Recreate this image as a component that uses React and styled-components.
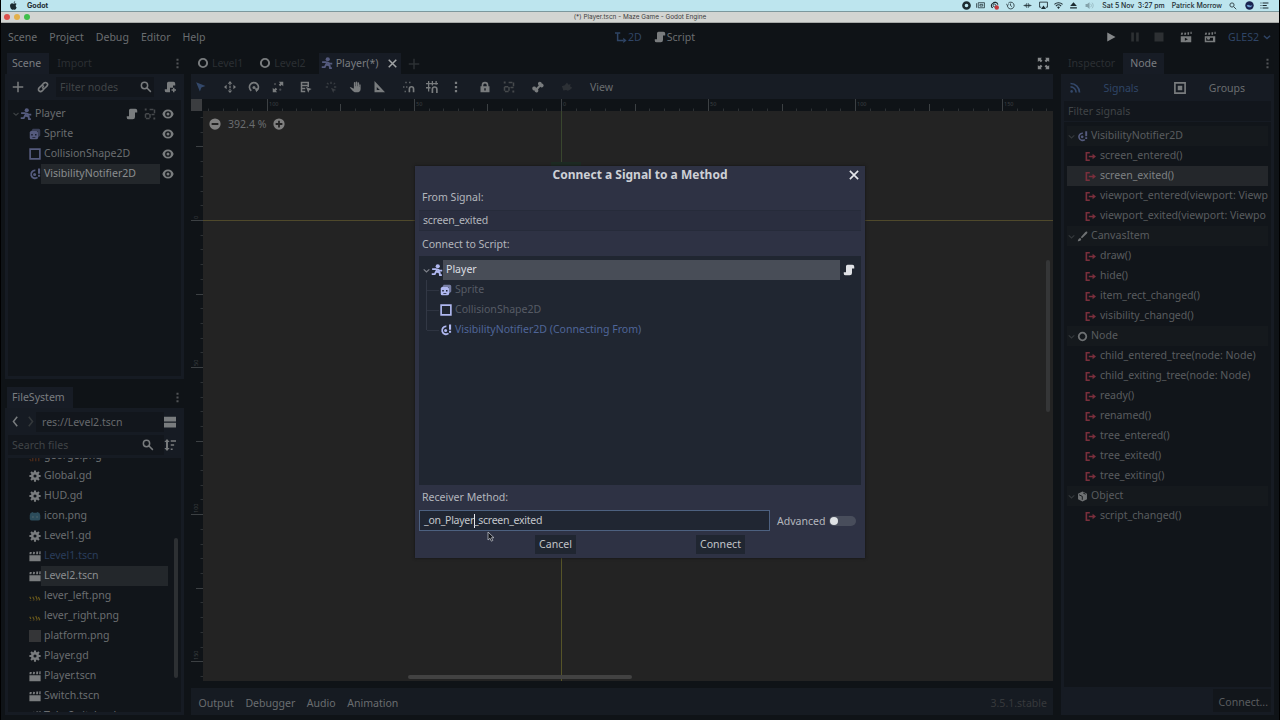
import React, { useState } from 'react';
import styled, { createGlobalStyle } from 'styled-components';

const GlobalStyle = createGlobalStyle`
  body {
    margin: 0;
    background: #000;
    overflow: hidden;
  }
  * {
    box-sizing: border-box;
  }
`;

/* ---------- icons ---------- */

const ICONS = {
  plus: <path d="M8 1v14M1 8h14" strokeWidth="2" stroke="currentColor" />,
  link: (
    <g fill="none" stroke="currentColor" strokeWidth="2.200" strokeLinecap="round">
      <path d="M7 5l2.200-2.200a2.600 2.600 0 0 1 4 4L11 9a2.600 2.600 0 0 1-3.600 0" />
      <path d="M9 11l-2.200 2.200a2.600 2.600 0 0 1-4-4L5 7a2.600 2.600 0 0 1 3.600 0" />
    </g>
  ),
  search: (
    <g fill="none" stroke="currentColor" strokeWidth="2">
      <circle cx="6" cy="6" r="4.200" />
      <path d="M9 9l5.500 5.500" />
    </g>
  ),
  script: <path d="M6 1a2 2 0 0 0-2 2v8H1v1.500a2.500 2.500 0 0 0 2.500 2.500H9a3 3 0 0 0 3-3V6h3V3.500A2.500 2.500 0 0 0 12.500 1z" />,
  scriptPlus: (
    <>
      <path d="M6 1a2 2 0 0 0-2 2v8H1v1.500a2.500 2.500 0 0 0 2.500 2.500H8V9h4V6h3V3.500A2.500 2.500 0 0 0 12.500 1z" />
      <path d="M12 9h2v2h2v2h-2v2h-2v-2h-2v-2h2z" />
    </>
  ),
  group: (
    <g fill="none" stroke="currentColor" strokeWidth="2">
      <path d="M7.500 2H14v6.500h-4M2 7.500h6V14H2z" strokeDasharray="5 1.500" />
      <path d="M1 2h2.500M12.500 14H15" strokeWidth="2.500" />
    </g>
  ),
  eye: (
    <>
      <path d="M8 2C4.200 2 1.300 4.600.5 8c.8 3.400 3.700 6 7.500 6s6.700-2.600 7.500-6C14.700 4.600 11.800 2 8 2zm0 2.200a3.800 3.800 0 1 1 0 7.600 3.800 3.800 0 0 1 0-7.600z" fillRule="evenodd" />
      <circle cx="8" cy="8" r="2" />
    </>
  ),
  body: (
    <>
      <circle cx="9" cy="3" r="2.800" />
      <path
        d="M1.500 6.800h4.500l3 .8 2.500 1.200H15M8.500 7L6.500 10.500l-1.500 3H1M7.500 10l4 1.500.5 3.500h2.500"
        fill="none"
        stroke="currentColor"
        strokeWidth="2.500"
        strokeLinejoin="round"
      />
    </>
  ),
  sprite: (
    <>
      <path d="M5 1h8a2 2 0 0 1 2 2v7l-3 3V4H3z" opacity="0.6" />
      <path d="M1 6a2 2 0 0 1 2-2h7a2 2 0 0 1 2 2v7a2 2 0 0 1-2 2H3a2 2 0 0 1-2-2z" />
      <path d="M3 8h2v2H3zM8 8h2v2H8zM4.500 12h4v1h-4z" fill="#1b2030" />
    </>
  ),
  square: <path d="M1.500 1.500h13v13h-13z" fill="none" stroke="currentColor" strokeWidth="2.200" />,
  notifier: (
    <>
      <path d="M8.500 3.300A5.200 5.200 0 1 0 11.300 12.500" fill="none" stroke="currentColor" strokeWidth="2.400" />
      <circle cx="7.500" cy="8.500" r="2" />
      <path d="M12 .5h2.800v7H12zM12 9h2.800v2.500H12z" />
    </>
  ),
  ring: <circle cx="8" cy="8" r="5.500" fill="none" stroke="currentColor" strokeWidth="2.600" />,
  close: <path d="M2.500 2.500l11 11M13.500 2.500l-11 11" stroke="currentColor" strokeWidth="2.200" />,
  axes: (
    <>
      <path d="M3.500 3v9.500H11" fill="none" stroke="currentColor" strokeWidth="2" />
      <path d="M0 3.500h7V1.500H0zM11 9l4.500 3.500L11 16z" />
    </>
  ),
  play: <path d="M3 2v12l11-6z" />,
  pause: <path d="M3 2h3.500v12H3zM9.500 2H13v12H9.500z" />,
  stop: <path d="M2 2h12v12H2z" />,
  clapPlay: (
    <>
      <path d="M1 7h14v8H1z" />
      <path d="M1 5l1-3 2 .4L3.500 5zM5.500 5l.6-3 2.200.2L8 5zM10 5V1.800h2.200L12 5zM14 4V1h1.500v3z" />
      <path d="M6.500 9v4l4-2z" fill="#101417" />
    </>
  ),
  clapFile: (
    <>
      <path d="M1 7h14v8H1zM3 9v4h9V9z" fillRule="evenodd" />
      <path d="M1 5l1-3 2 .4L3.500 5zM5.500 5l.6-3 2.200.2L8 5zM10 5V1.800h2.200L12 5zM14 4V1h1.500v3z" />
      <circle cx="6" cy="9.500" r="2" />
    </>
  ),
  clap: (
    <>
      <path d="M.5 7H15.500v8H.5z" />
      <path d="M.5 5.500L1 2.500l2.800.3-.6 2.700zM5 5.500l.6-3.200 2.400.2-.5 3zM9.500 5.500l.3-3.500h2.500L12 5.500zM13.500 5.500l.4-4h1.600v4z" />
    </>
  ),
  arrow: <path d="M1.500 1.500l5 12.500 2-5.500 5.500-2z" />,
  move: (
    <>
      <path d="M8 0l3 3.500H5zM8 16l3-3.500H5zM0 8l3.500-3v6zM16 8l-3.500-3v6z" />
      <path d="M6.900 6.900h2.200v2.200H6.900zM7 4.300h2v1.400H7zM7 10.300h2v1.400H7z" />
    </>
  ),
  rotate: (
    <>
      <path d="M4.500 13A6 6 0 1 1 12 12.500" fill="none" stroke="currentColor" strokeWidth="2.200" />
      <circle cx="8" cy="8.500" r="2" />
      <path d="M9 9.500h6L11 15z" />
    </>
  ),
  scale: (
    <>
      <path d="M9 1h6v6l-2-2-2 2-2-2 2-2zM7 15H1V9l2 2 2-2 2 2-2 2z" />
      <circle cx="4" cy="4" r="1.500" opacity="0.5" />
      <circle cx="11" cy="11.500" r="1.500" opacity="0.5" />
    </>
  ),
  listSelect: (
    <>
      <path d="M1 1h11v7h-2V7H3v2h4v2H3v2h4v2H1zM3 3v2h7V3z" fillRule="evenodd" />
      <path d="M8 8l7.500 2.800-3 1.400L11 15.500z" />
    </>
  ),
  pivot: (
    <g opacity="0.55">
      <path d="M7 1h2v3H7zM1 7h3v2H1zM12 7h3v2h-3zM3 3l2 2M8 9l7 3-3 1-1 3z" />
      <path d="M2 3l1.500-1 2 2-1.500 1zM11 4l2-2 1 1-2 2z" />
    </g>
  ),
  hand: <path d="M6.500 8V2.200a1 1 0 0 1 2 0V7h.5V1.500a1 1 0 0 1 2 0V7h.5V2.500a1 1 0 0 1 2 0V8h.3V5a.9.9 0 0 1 1.700 0v5.500c0 3-2 4.500-5 4.500H9c-2 0-3.200-.8-4.200-2L1 8.800c.8-.9 2-.8 3 .1L5.500 10h1z" />,
  ruler: <path d="M2 0v15h14zM5 8l4.200 4H5z" fillRule="evenodd" />,
  snap: (
    <>
      <path d="M3 1h2v2H3zM8 1h2v2H8zM0 7h2v2H0zM4 7h2v2H4zM2 13h2v2H2z" opacity="0.7" />
      <path d="M8.500 15v-4.500a2.800 2.800 0 0 1 5.600 0V15" fill="none" stroke="currentColor" strokeWidth="2.200" />
    </>
  ),
  gridSnap: (
    <>
      <path d="M3.500 0v14M8.500 0v6M13.500 0v5M0 3.500h16M0 9h6" fill="none" stroke="currentColor" strokeWidth="1.700" />
      <path d="M8.500 16v-5a3 3 0 0 1 6 0v5" fill="none" stroke="currentColor" strokeWidth="2.200" />
    </>
  ),
  dots: <path d="M6.500 1h3v3h-3zM6.500 6.500h3v3h-3zM6.500 12h3v3h-3z" />,
  lock: <path d="M8 1a4.500 4.500 0 0 0-4.500 4.500V7H2v8h12V7h-1.500V5.500A4.500 4.500 0 0 0 8 1zm0 2.200a2.300 2.300 0 0 1 2.300 2.300V7H5.700V5.500A2.300 2.300 0 0 1 8 3.200zM7 9.500h2v3H7z" fillRule="evenodd" />,
  bone: <path d="M10.500 1a2.500 2.500 0 0 0-2.300 3.500L9 6 5.500 9.200a2.600 2.600 0 1 0-2 3.300 2.500 2.500 0 1 0 4.400-1.300L11 7.800a2.600 2.600 0 1 0 2-4.400A2.500 2.500 0 0 0 10.500 1z" />,
  paw: <path d="M5 5.500L8 2l2 3 3-1-1 3 3 2-3 2.500-3 1.500-2-1-4 .5L2 9l-1-2z" opacity="0.6" />,
  expand: <path d="M1 1h5L4.700 2.500l2 2-2 2-2-2L1 6zM15 1v5l-1.700-1.500-2 2-2-2 2-2L10 1zM1 15v-5l1.700 1.500 2-2 2 2-2 2L6 15zM15 15h-5l1.300-1.500-2-2 2-2 2 2L15 10z" />,
  signals: (
    <g fill="none" stroke="currentColor" strokeWidth="2.200">
      <path d="M2 2a12 12 0 0 1 12 12M2 6.500A7.500 7.500 0 0 1 9.500 14" />
      <circle cx="3.500" cy="12.500" r="1.700" fill="currentColor" stroke="none" />
    </g>
  ),
  groups: (
    <>
      <path d="M1.200 1.200h13.600v13.600H1.200z" fill="none" stroke="currentColor" strokeWidth="2.200" />
      <path d="M5 5h6v6H5z" />
    </>
  ),
  emit: (
    <>
      <path d="M7 2.500H2v11h5" fill="none" stroke="currentColor" strokeWidth="2.400" />
      <path d="M5.500 6.800H11V4l5 4-5 4V9.200H5.500z" />
    </>
  ),
  brush: <path d="M14.800 1.200c-.8-.7-2-.4-2.700.3L5.500 9l1.800 1.700 7.200-7c.6-.7.9-1.800.3-2.500zM4.500 10C2.500 10.500 2 12 1 14.800c2.500.4 4.800-.6 5.200-3.200z" />,
  cube: (
    <>
      <path d="M8 .7L1.500 4v8L8 15.300 14.500 12V4z" />
      <path d="M3 5.500l4.700 2.300v5M12.500 4.700L9 3" stroke="#15191c" strokeWidth="1.400" fill="none" />
    </>
  ),
  gear: (
    <>
      <path d="M8 .5v15M.5 8h15M2.700 2.700l10.600 10.600M13.300 2.700L2.700 13.300" stroke="currentColor" strokeWidth="2.800" />
      <circle cx="8" cy="8" r="3.800" fill="none" stroke="currentColor" strokeWidth="3" />
      <circle cx="8" cy="8" r="2.100" fill="#11151a" />
    </>
  ),
  godot: (
    <>
      <path d="M2 4L5 2.500l1 1h4l1-1L14 4l1 3v5a3 3 0 0 1-3 2H4a3 3 0 0 1-3-2V7z" fill="#2c4c5b" />
      <path d="M4 8h2.500v2.500H4zM9.500 8H12v2.500H9.500z" fill="#3f5963" />
    </>
  ),
  lever: (
    <>
      <path d="M1 9l1.500 3M5 9l2 4M9 8l2 5M12.500 9.500l2 4" stroke="#6b5a1c" strokeWidth="1.500" />
      <path d="M1 14h13" stroke="#453a1c" strokeDasharray="2 2" />
    </>
  ),
  george: <path d="M1 12l2 3M5 10v5M9 11v4M13 9v6" stroke="#4a2a1a" strokeWidth="1.800" />,
  platform: <path d="M0 0h16v16H0z" fill="#343537" />,
  left: <path d="M10.500 1L5 8l5.500 7" fill="none" stroke="currentColor" strokeWidth="2.200" />,
  right: <path d="M5.500 1L11 8l-5.500 7" fill="none" stroke="currentColor" strokeWidth="2.200" />,
  down: <path d="M3 6l5 4.500L13 6" fill="none" stroke="currentColor" strokeWidth="2.200" />,
  split: <path d="M0 1h16v6.300H0zM0 9h16v6.300H0z" />,
  sort: (
    <>
      <path d="M4 0l3.500 4H5.300v8h2.200L4 16 .5 12h2.200V4H.5z" />
      <path d="M9 1.500h7v2H9zM9 7h4.500v2H9zM9 12.500h2.500v2H9z" />
    </>
  ),
  minusDisc: <path d="M8 .5a7.500 7.500 0 1 1 0 15 7.500 7.500 0 0 1 0-15zM3.500 6.800v2.400h9V6.800z" fillRule="evenodd" />,
  plusDisc: <path d="M8 .5a7.500 7.500 0 1 1 0 15 7.500 7.500 0 0 1 0-15zM6.800 3.500v3.300H3.500v2.400h3.300v3.300h2.400V9.200h3.300V6.800H9.200V3.500z" fillRule="evenodd" />,
  apple: (
    <>
      <path d="M11 .3c.1 1.500-1.200 3-2.700 3C8.200 1.800 9.600.5 11 .3z" />
      <path d="M13.600 11.500c-.7 1.800-2 4-3.400 4-.9 0-1.200-.6-2.200-.6s-1.400.6-2.200.6C4 15.500 1.800 11.700 1.800 8.500c0-2.800 1.800-4.400 3.600-4.400 1 0 1.900.7 2.600.7.600 0 1.700-.8 3-.7.8 0 2 .4 2.600 1.400-2.400 1.500-2 4.900 0 6z" />
    </>
  ),
  record: <circle cx="8" cy="8" r="5.500" fill="none" stroke="currentColor" strokeWidth="4.500" />,
  stage: (
    <g fill="none" stroke="currentColor" strokeWidth="1.300">
      <path d="M4 3h11v9H4zM1 4v8" />
      <path d="M7 6h5v3H7z" />
    </g>
  ),
  cloud: (
    <>
      <path d="M5 12a4 4 0 0 1 0-7.500 5 5 0 0 1 9 2" fill="none" stroke="currentColor" strokeWidth="2" />
      <circle cx="8" cy="8" r="2.400" fill="none" stroke="currentColor" strokeWidth="1.500" />
      <circle cx="12" cy="11.500" r="4" fill="#c3383c" />
    </>
  ),
  clock: (
    <g fill="none" stroke="currentColor" strokeWidth="1.400">
      <path d="M2.500 9A6 6 0 1 0 4 4M8 4.500V8l2.500 2M1 5l1.600 3.500L5 6" />
    </g>
  ),
  wave: <path d="M1 8h14M4 6v4M6.500 4v8M9.500 4v8M12 6v4" stroke="currentColor" strokeWidth="1.300" />,
  airplay: (
    <>
      <path d="M4 11H1V2h14v9h-3" fill="none" stroke="currentColor" strokeWidth="1.500" />
      <path d="M8 8l4.500 6h-9z" />
    </>
  ),
  wifi: (
    <g fill="none" stroke="currentColor" strokeWidth="1.800">
      <path d="M.8 6a10.500 10.500 0 0 1 14.400 0M3.300 9a6.800 6.800 0 0 1 9.400 0" />
      <path d="M5.500 11L8 14l2.500-3A3.600 3.600 0 0 0 5.500 11z" fill="currentColor" stroke="none" />
    </g>
  ),
  eject: <path d="M8 2l6 7H2zM2 11h12v2.200H2z" />,
  volume: (
    <g opacity="0.35">
      <path d="M1 5.500h3L8 2v12l-4-3.500H1z" />
      <path d="M10 5a4 4 0 0 1 0 6M12.500 3a7 7 0 0 1 0 10" fill="none" stroke="currentColor" />
    </g>
  ),
  siri: (
    <>
      <circle cx="8" cy="8" r="7.500" fill="#1a2350" />
      <path d="M3 8.500C6 3.500 9 11 13 7c-1 4.500-6 6-10 1.500z" fill="#6d9fd0" />
    </>
  ),
  list: <path d="M1 3.500h1.500M4.500 3.500H15M1 8h1.500M4.500 8H12M1 12.500h1.500M4.500 12.500H15" stroke="currentColor" strokeWidth="1.800" />,
};

const Svg = styled.svg`
  display: block;
  flex: none;
  width: ${(p) => p.$size}px;
  height: ${(p) => p.$size}px;
  color: ${(p) => p.$color};
  margin-left: ${(p) => p.$before || 0}px;
`;

const Icon = ({ name, size = 12, color = '#797c7e', before }) => (
  <Svg viewBox="0 0 16 16" fill="currentColor" $size={size} $color={color} $before={before}>
    {ICONS[name]}
  </Svg>
);

/* ---------- window chrome ---------- */

const Screen = styled.div`
  width: 1280px;
  height: 720px;
  display: flex;
  flex-direction: column;
  border: solid #000;
  border-width: 0 1px;
  background: #0f1317;
  font-family: 'Noto Sans', sans-serif;
  font-size: 10.55px;
  line-height: 20px;
  color: #6a6d70;
  white-space: nowrap;
  overflow: hidden;
`;

const MacBar = styled.div`
  display: flex;
  align-items: center;
  height: 12px;
  flex: none;
  padding: 0 10px 0 8px;
  background: #bde5ee;
  border-bottom: 1px solid #7d989d;
  color: #1c2b30;
  font-family: Inter, sans-serif;
  font-size: 6.9px;
  font-weight: 500;
  line-height: 11px;
`;

const AppName = styled.b`
  margin: 0 auto 0 9px;
  font-size: 7.1px;
  font-weight: 700;
`;

const MacText = styled.span`
  margin-left: ${(p) => p.$before}px;
`;

const TitleBar = styled.div`
  display: grid;
  grid-template-columns: 120px 1fr 120px;
  align-items: center;
  height: 11px;
  flex: none;
  background: #d3d5d2;
  border-bottom: 1px solid #a7aaa8;
  color: #3d4040;
  font-family: Inter, sans-serif;
  font-size: 6.4px;
  line-height: 10px;
  text-align: center;
`;

const Lights = styled.div`
  display: flex;
  gap: 4px;
  padding-left: 3px;
`;

const Light = styled.i`
  width: 6px;
  height: 6px;
  border-radius: 50%;
  background: ${(p) => p.$color};
`;

/* ---------- editor layout ---------- */

const TopMenu = styled.div`
  display: grid;
  grid-template-columns: 607px 1fr auto;
  align-items: center;
  height: 28px;
  flex: none;
  padding: 0 7px;
`;

const Group = styled.div`
  display: flex;
  align-items: center;
  gap: ${(p) => p.$gap || 0}px;
`;

const Accent = styled.span`
  color: #2f4566;
  margin-right: ${(p) => p.$after || 0}px;
`;

const Main = styled.div`
  display: grid;
  grid-template-columns: 179px 863px 213px;
  column-gap: 7px;
  flex: 1;
  min-height: 0;
  padding: 2px 0 5px 4px;
`;

const Column = styled.div`
  display: flex;
  flex-direction: column;
  min-width: 0;
  min-height: 0;
  padding-right: ${(p) => p.$end || 0}px;
`;

const TabRow = styled.div`
  display: flex;
  align-items: center;
  height: 21px;
  flex: none;
  padding: ${(p) => p.$pad || '0 1px 0 2px'};
`;

const Tab = styled.div`
  display: flex;
  align-items: center;
  height: 21px;
  padding: ${(p) => p.$pad || '0 8px 0 5px'};
  border-bottom: 1px solid transparent;
  background: ${(p) => (p.$active ? '#171c25' : 'transparent')};
  color: ${(p) => (p.$active ? '#7a7d80' : '#2b2f33')};
`;

const TabText = styled.span`
  margin-left: 3px;
`;

const Spacer = styled.span`
  flex: 1;
`;

const Dock = styled.div`
  display: flex;
  flex-direction: column;
  height: ${(p) => (p.$height ? `${p.$height}px` : 'auto')};
  flex: ${(p) => (p.$height ? 'none' : 1)};
  min-height: 0;
  padding: 0 3px 3px;
  background: #161b23;
`;

const DockGap = styled.div`
  height: 8px;
  flex: none;
`;

const BarRow = styled.div`
  display: flex;
  align-items: center;
  flex: none;
  height: ${(p) => p.$height}px;
  padding: ${(p) => p.$pad || 0};
`;

const Field = styled.div`
  display: flex;
  align-items: center;
  justify-content: space-between;
  flex: 1;
  height: 20px;
  margin-left: ${(p) => p.$before || 0}px;
  padding: ${(p) => p.$pad || '0 5px 0 4px'};
  background: #12161c;
  color: ${(p) => (p.$filled ? '#66696c' : '#404447')};
`;

const TreeBox = styled.div`
  position: relative;
  flex: 1;
  min-height: 0;
  overflow: hidden;
  padding: 4px 3px;
  background: #11151a;
`;

const TreeRow = styled.div`
  display: flex;
  align-items: center;
  height: 20px;
  padding-left: ${(p) => p.$indent || 0}px;
`;

const RowLabel = styled.span`
  flex: 1;
  height: 20px;
  padding-left: 3px;
  line-height: 18px;
  background: ${(p) => (p.$selected ? '#23272b' : 'transparent')};
  color: ${(p) => p.$color || (p.$selected ? '#8a8d8f' : '#6a6d70')};
`;

const RowTools = styled.div`
  display: flex;
  align-items: center;
  justify-content: flex-end;
  gap: 6px;
  padding: 0 4px 0 2px;
`;

/* ---------- left column ---------- */

const NODE_BLUE = '#555b7e';

const NODES = [
  { icon: 'sprite', label: 'Sprite' },
  { icon: 'square', label: 'CollisionShape2D' },
  { icon: 'notifier', label: 'VisibilityNotifier2D', selected: true },
];

const FILES = [
  { icon: 'george', label: 'george.png' },
  { icon: 'gear', label: 'Global.gd' },
  { icon: 'gear', label: 'HUD.gd' },
  { icon: 'godot', label: 'icon.png' },
  { icon: 'gear', label: 'Level1.gd' },
  { icon: 'clap', label: 'Level1.tscn', color: '#2a3d5a' },
  { icon: 'clap', label: 'Level2.tscn', selected: true },
  { icon: 'lever', label: 'lever_left.png' },
  { icon: 'lever', label: 'lever_right.png' },
  { icon: 'platform', label: 'platform.png' },
  { icon: 'gear', label: 'Player.gd' },
  { icon: 'clap', label: 'Player.tscn' },
  { icon: 'clap', label: 'Switch.tscn' },
  { icon: 'clap', label: 'TubeSwitch.gd' },
];

const FileTree = styled(TreeBox)`
  margin-top: 2px;
  padding: 0;
`;

// the list is scrolled part of a row down
const FileList = styled.div`
  margin-top: -12px;
  width: 160px;
`;

const ScrollThumb = styled.i`
  position: absolute;
  border-radius: 3px;
  background: ${(p) => p.$color || '#2d3033'};
  left: ${(p) => p.$x}px;
  top: ${(p) => p.$y}px;
  width: ${(p) => p.$w}px;
  height: ${(p) => p.$h}px;
`;

function SceneDock() {
  return (
    <>
      <TabRow>
        <Tab $active>Scene</Tab>
        <Tab $pad="0 8px">Import</Tab>
        <Spacer />
        <Icon name="dots" size={11} color="#505356" />
      </TabRow>
      <Dock $height={305}>
        <BarRow $height={26} $pad="0 5px 0 4px">
          <Icon name="plus" />
          <Icon name="link" before={13} />
          <Field $before={7} $pad="0 2px 0 4px">
            Filter nodes
            <Icon name="search" />
          </Field>
          <Icon name="scriptPlus" before={10} />
        </BarRow>
        <TreeBox>
          <TreeRow $indent={1}>
            <Icon name="down" size={8} color="#3c4043" />
            <Icon name="body" color={NODE_BLUE} />
            <RowLabel>Player</RowLabel>
            <RowTools>
              <Icon name="script" />
              <Icon name="group" color="#46494c" />
              <Icon name="eye" />
            </RowTools>
          </TreeRow>
          {NODES.map((n) => (
            <TreeRow key={n.label} $indent={18}>
              <Icon name={n.icon} color={NODE_BLUE} />
              <RowLabel $selected={n.selected}>{n.label}</RowLabel>
              <RowTools>
                <Icon name="eye" />
              </RowTools>
            </TreeRow>
          ))}
        </TreeBox>
      </Dock>
    </>
  );
}

function FileSystemDock() {
  return (
    <>
      <TabRow>
        <Tab $active>FileSystem</Tab>
        <Spacer />
        <Icon name="dots" size={11} color="#505356" />
      </TabRow>
      <Dock>
        <BarRow $height={27} $pad="0 5px 0 2px">
          <Icon name="left" size={11} />
          <Icon name="right" size={11} color="#34383b" before={4} />
          <Field $filled $pad="0 5px 0 6px">
            res://Level2.tscn
          </Field>
          <Icon name="split" />
        </BarRow>
        <BarRow $height={21} $pad="0 5px 2px 0">
          <Field $pad="0 10px 0 4px">
            Search files
            <Icon name="search" />
          </Field>
          <Icon name="sort" />
        </BarRow>
        <FileTree>
          <FileList>
            {FILES.map((f) => (
              <TreeRow key={f.label} $indent={21}>
                <Icon name={f.icon} />
                <RowLabel $selected={f.selected} $color={f.color}>
                  {f.label}
                </RowLabel>
              </TreeRow>
            ))}
          </FileList>
          <ScrollThumb $x={166} $y={80} $w={4} $h={140} />
        </FileTree>
      </Dock>
    </>
  );
}

/* ---------- viewport ---------- */

// icon, space before it, colour
const TOOLS = [
  ['arrow', 4, '#33486a'],
  ['move', 17],
  ['rotate', 12],
  ['scale', 12],
  ['listSelect', 16],
  ['pivot', 13, '#54575a'],
  ['hand', 12],
  ['ruler', 12],
  ['snap', 18],
  ['gridSnap', 11],
  ['dots', 12],
  ['lock', 17],
  ['group', 12, '#46494c'],
  ['bone', 17],
  ['paw', 17, '#3b3e41'],
];

const Toolbar = styled.div`
  display: flex;
  align-items: center;
  height: 25px;
  flex: none;
  background: #171c24;
`;

const ViewMenu = styled.span`
  margin-left: 17px;
`;

const Viewport = styled.div`
  display: grid;
  grid-template-columns: 12px 1fr;
  grid-template-rows: 12px 1fr;
  height: 582px;
  flex: none;
`;

const Corner = styled.div`
  background: #3b3d40;
  margin-right: 1px;
`;

const RulerSvg = styled.svg`
  display: block;
  background: #0f1317;
  font-size: 5.5px;
`;

const Canvas = styled.div`
  position: relative;
  background: #232323;
`;

const ZoomBar = styled.div`
  display: flex;
  align-items: center;
  gap: 7px;
  padding: 3px 0 0 6px;
`;

const OriginX = styled.i`
  position: absolute;
  left: 0;
  right: 0;
  top: 109px;
  height: 1px;
  background: #4f492b;
`;

const OriginY = styled.i`
  position: absolute;
  top: 0;
  bottom: 0;
  left: 358px;
  width: 1px;
  background: linear-gradient(#39462e 0 60px, #565428 60px);
`;

const SpriteEdge = styled.i`
  position: absolute;
  left: 348px;
  top: 51px;
  width: 30px;
  height: 5px;
  background: #1d2b23;
`;

const BottomPanel = styled.div`
  display: flex;
  align-items: center;
  gap: 11.5px;
  height: 27px;
  margin-top: 7px;
  padding: 2px 6px 0 7.5px;
  background: #161b22;
`;

const Version = styled.span`
  margin-left: auto;
  color: #36393c;
`;

const STEP = 14.71;

// ticks every 5 units, longer ones every 25, labels every 50
function ticks(origin, length) {
  const out = [];
  for (let i = Math.ceil(-origin / STEP); origin + i * STEP < length; i++) {
    out.push({ i, at: Math.round(origin + i * STEP) + 0.5, size: i % 10 === 0 ? 12 : i % 5 === 0 ? 7 : 2.5 });
  }
  return out;
}

function HorizontalRuler() {
  return (
    <RulerSvg width="850" height="12">
      {ticks(358, 850).map((t) => (
        <g key={t.i}>
          <path d={`M${t.at} 12v-${t.size}`} stroke={t.size > 5 ? '#3c4043' : '#2d3134'} />
          {t.i % 10 === 0 && (
            <text x={t.at + 1.5} y="7" fill="#3c4043">
              {Math.abs(t.i * 5)}
            </text>
          )}
        </g>
      ))}
    </RulerSvg>
  );
}

function VerticalRuler() {
  return (
    <RulerSvg width="12" height="570">
      {ticks(109, 570).map((t) => (
        <g key={t.i}>
          <path d={`M12 ${t.at}h-${t.size}`} stroke={t.size > 5 ? '#3c4043' : '#2d3134'} />
          {t.i % 10 === 0 && (
            <text transform={`translate(7 ${t.at - 1.5}) rotate(-90)`} fill="#3c4043">
              {Math.abs(t.i * 5)}
            </text>
          )}
        </g>
      ))}
    </RulerSvg>
  );
}

function Workspace() {
  return (
    <Column $end={1}>
      <TabRow $pad="0 3px 0 0">
        <Tab $pad="0 9px 0 6px">
          <Icon name="ring" />
          <TabText>Level1</TabText>
        </Tab>
        <Tab $pad="0 13px 0 7px">
          <Icon name="ring" />
          <TabText>Level2</TabText>
        </Tab>
        <Tab $active $pad="0 3px 0 2px">
          <Icon name="body" color={NODE_BLUE} />
          <TabText>Player(*)</TabText>
          <Icon name="close" size={11} color="#a0a3a5" before={8} />
        </Tab>
        <Icon name="plus" color="#2d3134" before={7} />
        <Spacer />
        <Icon name="expand" size={13} color="#85888a" />
      </TabRow>
      <Toolbar>
        {TOOLS.map(([name, before, color]) => (
          <Icon key={name} name={name} before={before} color={color} />
        ))}
        <ViewMenu>View</ViewMenu>
      </Toolbar>
      <Viewport>
        <Corner />
        <HorizontalRuler />
        <VerticalRuler />
        <Canvas>
          <OriginX />
          <OriginY />
          <SpriteEdge />
          <ZoomBar>
            <Icon name="minusDisc" color="#808080" />
            392.4 %
            <Icon name="plusDisc" color="#808080" />
          </ZoomBar>
          <ScrollThumb $x={205} $y={564} $w={224} $h={4} $color="#424242" />
          <ScrollThumb $x={843} $y={149} $w={4} $h={152} $color="#353637" />
        </Canvas>
      </Viewport>
      <BottomPanel>
        {['Output', 'Debugger', 'Audio', 'Animation'].map((t) => (
          <span key={t}>{t}</span>
        ))}
        <Version>3.5.1.stable</Version>
      </BottomPanel>
    </Column>
  );
}

/* ---------- signals ---------- */

const SIGNALS = [
  {
    icon: 'notifier',
    color: NODE_BLUE,
    name: 'VisibilityNotifier2D',
    items: ['screen_entered()', 'screen_exited()', 'viewport_entered(viewport: Viewp', 'viewport_exited(viewport: Viewpo'],
  },
  { icon: 'brush', name: 'CanvasItem', items: ['draw()', 'hide()', 'item_rect_changed()', 'visibility_changed()'] },
  {
    icon: 'ring',
    name: 'Node',
    items: [
      'child_entered_tree(node: Node)',
      'child_exiting_tree(node: Node)',
      'ready()',
      'renamed()',
      'tree_entered()',
      'tree_exited()',
      'tree_exiting()',
    ],
  },
  { icon: 'cube', name: 'Object', items: ['script_changed()'] },
];

const SignalTree = styled(TreeBox)`
  margin-top: 1px;
`;

const SignalRow = styled(TreeRow)`
  background: ${(p) => (p.$selected ? '#24272b' : p.$head ? '#15191d' : 'transparent')};
  color: ${(p) => (p.$selected ? '#7d8082' : '#595c5f')};
`;

const SignalText = styled.span`
  height: 20px;
  margin-left: ${(p) => (p.$head ? 3 : 4)}px;
  line-height: 18px;
`;

const Modes = styled(BarRow)`
  display: grid;
  grid-template-columns: 12px 93px 12px 82px;
  text-align: center;
`;

const ConnectRow = styled.div`
  display: flex;
  justify-content: flex-end;
  height: 23px;
  margin-top: 2px;
`;

const ConnectButton = styled.div`
  padding: 3px 3px 0 6px;
  background: #12161b;
  color: #595c5f;
`;

function NodeDock() {
  return (
    <Column>
      <TabRow>
        <Tab>Inspector</Tab>
        <Tab $active $pad="0 7px">
          Node
        </Tab>
        <Spacer />
        <Icon name="dots" size={11} color="#505356" />
      </TabRow>
      <Dock>
        <Modes $height={27} $pad="0 0 0 5px">
          <Icon name="signals" color="#33486a" />
          <Accent $after={13}>Signals</Accent>
          <Icon name="groups" />
          <span>Groups</span>
        </Modes>
        <BarRow $height={20}>
          <Field $pad="0 4px">Filter signals</Field>
        </BarRow>
        <SignalTree>
          {SIGNALS.map((s) => (
            <React.Fragment key={s.name}>
              <SignalRow $head>
                <Icon name="down" size={9} color="#34383b" />
                <Icon name={s.icon} color={s.color || '#6e7173'} size={11} before={1} />
                <SignalText $head>{s.name}</SignalText>
              </SignalRow>
              {s.items.map((item) => (
                <SignalRow key={item} $indent={18} $selected={item === 'screen_exited()'}>
                  <Icon name="emit" size={11} color="#7a2f3c" />
                  <SignalText>{item}</SignalText>
                </SignalRow>
              ))}
            </React.Fragment>
          ))}
        </SignalTree>
        <ConnectRow>
          <ConnectButton>Connect...</ConnectButton>
        </ConnectRow>
      </Dock>
    </Column>
  );
}

/* ---------- dialog ---------- */

const Dialog = styled.div`
  position: absolute;
  left: 415px;
  top: 166px;
  width: 450px;
  height: 392px;
  display: flex;
  flex-direction: column;
  padding: 0 4px;
  background: #2e3244;
  color: #b3b6bc;
  box-shadow: 0 0 3px #141414;
`;

const DialogTitle = styled.div`
  display: grid;
  grid-template-columns: 20px 1fr 20px;
  align-items: center;
  justify-items: center;
  height: 17px;
  color: #cdd0d6;
  font-size: 12px;
  font-weight: 700;
  line-height: 16px;
`;

const Caption = styled.div`
  height: ${(p) => p.$height}px;
  padding: ${(p) => p.$top}px 3px 0;
`;

const SignalName = styled.div`
  height: 21px;
  padding: 0 4px;
  background: #2a2e3f;
  border: solid #262b3a;
  border-width: 1px 0;
  letter-spacing: -0.2px;
  line-height: 19px;
`;

const NodeTree = styled.div`
  height: 229px;
  padding: 4px 3px;
  background: #202631;
`;

const NodeLabel = styled.span`
  flex: 1;
  height: 20px;
  padding-left: 3px;
  margin-right: ${(p) => (p.$selected ? 3 : 0)}px;
  line-height: 18px;
  background: ${(p) => (p.$selected ? '#484d57' : 'transparent')};
  color: ${(p) => p.$color};
`;

const RootRow = styled(TreeRow)`
  padding-right: 3px;
`;

const Children = styled.div`
  margin-left: 4px;
  border-left: 1px solid #323845;
  height: 50px;
`;

const ChildRow = styled(TreeRow)`
  &::before {
    content: '';
    width: 12px;
    height: 1px;
    margin-right: 1px;
    background: #2e3441;
  }
`;

const MethodRow = styled.div`
  display: flex;
  align-items: center;
  height: 21px;
`;

const MethodInput = styled.div`
  display: flex;
  align-items: center;
  flex: none;
  width: 351px;
  height: 21px;
  padding: 0 4px;
  margin-right: 7px;
  background: #202632;
  border: 1px solid #4d6180;
  color: #c3c6cb;
  letter-spacing: -0.3px;
  line-height: 19px;
`;

const Caret = styled.i`
  width: 1px;
  height: 14px;
  margin-right: -1px;
  background: #e6e8ec;
`;

const Toggle = styled.button`
  display: flex;
  justify-content: ${(p) => (p.$on ? 'flex-end' : 'flex-start')};
  width: 27px;
  height: 10px;
  margin-left: 3px;
  padding: 1px;
  border: 0;
  border-radius: 5px;
  background: #484d5b;
`;

const Knob = styled.i`
  width: 8px;
  height: 8px;
  border-radius: 50%;
  background: #dfe2e5;
`;

const Actions = styled.div`
  display: flex;
  gap: 120px;
  padding: 4px 0 0 116px;
`;

const Button = styled.button`
  width: ${(p) => p.$width}px;
  height: 19px;
  padding: 0;
  border: 0;
  background: #202631;
  color: #c0c3c8;
  font: inherit;
  line-height: 19px;
`;

const Pointer = styled.svg`
  position: absolute;
  left: 72px;
  top: 365px;
  width: 8px;
  height: 11px;
`;

const LAVENDER = '#b0b8f0';

const TARGETS = [
  { icon: 'sprite', label: 'Sprite', color: '#565b65' },
  { icon: 'square', label: 'CollisionShape2D', color: '#565b65' },
  { icon: 'notifier', label: 'VisibilityNotifier2D (Connecting From)', color: '#4f6598' },
];

function ConnectDialog() {
  const [advanced, setAdvanced] = useState(false);

  return (
    <Dialog>
      <DialogTitle>
        <span />
        Connect a Signal to a Method
        <Icon name="close" color="#e4e6ea" before={6} />
      </DialogTitle>
      <Caption $height={27} $top={4}>
        From Signal:
      </Caption>
      <SignalName>screen_exited</SignalName>
      <Caption $height={25} $top={3}>
        Connect to Script:
      </Caption>
      <NodeTree>
        <RootRow>
          <Icon name="down" size={9} color="#7d818a" />
          <Icon name="body" color={LAVENDER} />
          <NodeLabel $selected $color="#dcdee2">
            Player
          </NodeLabel>
          <Icon name="script" color="#dfe1e5" />
        </RootRow>
        <Children>
          {TARGETS.map((t) => (
            <ChildRow key={t.label}>
              <Icon name={t.icon} color={LAVENDER} />
              <NodeLabel $color={t.color}>{t.label}</NodeLabel>
            </ChildRow>
          ))}
        </Children>
      </NodeTree>
      <Caption $height={25} $top={2}>
        Receiver Method:
      </Caption>
      <MethodRow>
        <MethodInput>
          _on_Player
          <Caret />
          _screen_exited
        </MethodInput>
        Advanced
        <Toggle $on={advanced} onClick={() => setAdvanced(!advanced)}>
          <Knob />
        </Toggle>
      </MethodRow>
      <Actions>
        <Button $width={41}>Cancel</Button>
        <Button $width={49}>Connect</Button>
      </Actions>
      <Pointer viewBox="0 0 8 11">
        <path d="M1 1v8l2-1.700 1.300 2.900 1.500-.7-1.300-2.800H7z" fill="#14161c" stroke="#b9bcc4" strokeWidth="0.8" />
      </Pointer>
    </Dialog>
  );
}

/* ---------- app ---------- */

const STATUS = [
  ['record', 0],
  ['stage', 5],
  ['cloud', 5],
  ['clock', 7],
  ['wave', 8],
  ['airplay', 7],
  ['wifi', 6],
  ['eject', 6],
  ['volume', 7],
];

export default function App() {
  return (
    <Screen>
      <GlobalStyle />
      <MacBar>
        <Icon name="apple" size={9} color="#1c2b30" />
        <AppName>Godot</AppName>
        {STATUS.map(([name, before]) => (
          <Icon key={name} name={name} before={before} size={9} color="#1c2b30" />
        ))}
        <MacText $before={8}>Sat 5 Nov&nbsp; 3:27 pm</MacText>
        <MacText $before={7}>Patrick Morrow</MacText>
        <Icon name="search" size={8} color="#3c4d52" before={7} />
        <Icon name="siri" size={9} before={8} />
        <Icon name="list" size={9} color="#1c2b30" before={6} />
      </MacBar>
      <TitleBar>
        <Lights>
          <Light $color="#dc4f4c" />
          <Light $color="#e2b04a" />
          <Light $color="#3fbf4b" />
        </Lights>
        (*) Player.tscn - Maze Game - Godot Engine
      </TitleBar>
      <TopMenu>
        <Group $gap={12}>
          {['Scene', 'Project', 'Debug', 'Editor', 'Help'].map((t) => (
            <span key={t}>{t}</span>
          ))}
        </Group>
        <Group $gap={1}>
          <Icon name="axes" color="#2f4566" />
          <Accent $after={11}>2D</Accent>
          <Icon name="script" />
          Script
        </Group>
        <Group $gap={12}>
          <Icon name="play" color="#85888a" />
          <Icon name="pause" color="#2d3033" />
          <Icon name="stop" color="#2d3033" />
          <Icon name="clapPlay" before={3} />
          <Icon name="clapFile" />
          <Accent>
            <Group $gap={3}>
              GLES2
              <Icon name="down" size={10} color="#2f4566" />
            </Group>
          </Accent>
        </Group>
      </TopMenu>
      <Main>
        <Column>
          <SceneDock />
          <DockGap />
          <FileSystemDock />
        </Column>
        <Workspace />
        <NodeDock />
      </Main>
      <ConnectDialog />
    </Screen>
  );
}
